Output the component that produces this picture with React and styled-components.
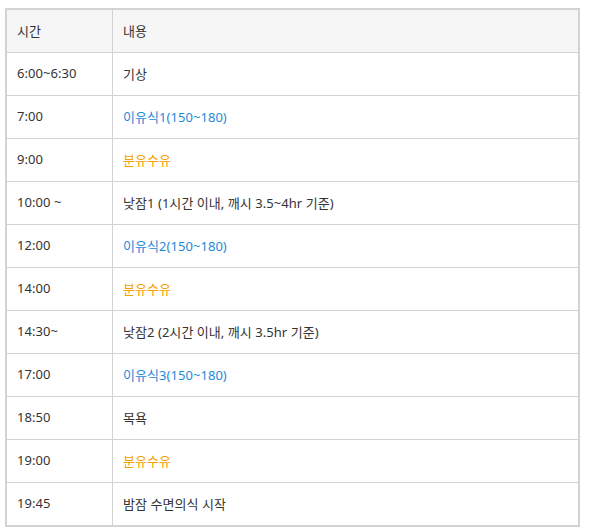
import React from "react";
import styled, { createGlobalStyle } from "styled-components";

const Global = createGlobalStyle`
  html, body { margin: 0; padding: 0; background: #ffffff; }
  body {
    font-family: "Noto Sans", "Noto Sans CJK KR", sans-serif;
    color: #333333;
  }
`;

const Page = styled.div`
  padding: 8px 0 0 5px;
  width: 575px;
`;

const Table = styled.div`
  border: 2px solid #d3d3d3;
  display: flex;
  flex-direction: column;
`;

const Row = styled.div`
  display: grid;
  grid-template-columns: 106px 1fr;
  height: 42px;
  background: ${(p) => (p.$head ? "#f6f6f6" : "#ffffff")};
  border-bottom: ${(p) => (p.$last ? "none" : "1px solid #d3d3d3")};
`;

const Cell = styled.div`
  display: flex;
  align-items: center;
  padding: 0 10px 2px 10px;
  font-size: 13px;
  letter-spacing: 0.05px;
  color: ${(p) => p.$color || "#333333"};
  border-right: ${(p) => (p.$first ? "1px solid #d3d3d3" : "none")};
  white-space: nowrap;
`;

const colors = {
  blue: "#1d8ad9",
  orange: "#f59f00",
};

const rows = [
  ["6:00~6:30", "기상"],
  ["7:00", "이유식1(150~180)", "blue"],
  ["9:00", "분유수유", "orange"],
  ["10:00 ~", "낮잠1 (1시간 이내, 깨시 3.5~4hr 기준)"],
  ["12:00", "이유식2(150~180)", "blue"],
  ["14:00", "분유수유", "orange"],
  ["14:30~", "낮잠2 (2시간 이내, 깨시 3.5hr 기준)"],
  ["17:00", "이유식3(150~180)", "blue"],
  ["18:50", "목욕"],
  ["19:00", "분유수유", "orange"],
  ["19:45", "밤잠 수면의식 시작"],
];

export default function App() {
  return (
    <Page>
      <Global />
      <Table>
        <Row $head>
          <Cell $first>시간</Cell>
          <Cell>내용</Cell>
        </Row>
        {rows.map(([t, c, k], i) => (
          <Row key={i} $last={i === rows.length - 1}>
            <Cell $first>{t}</Cell>
            <Cell $color={k ? colors[k] : undefined}>{c}</Cell>
          </Row>
        ))}
      </Table>
    </Page>
  );
}
